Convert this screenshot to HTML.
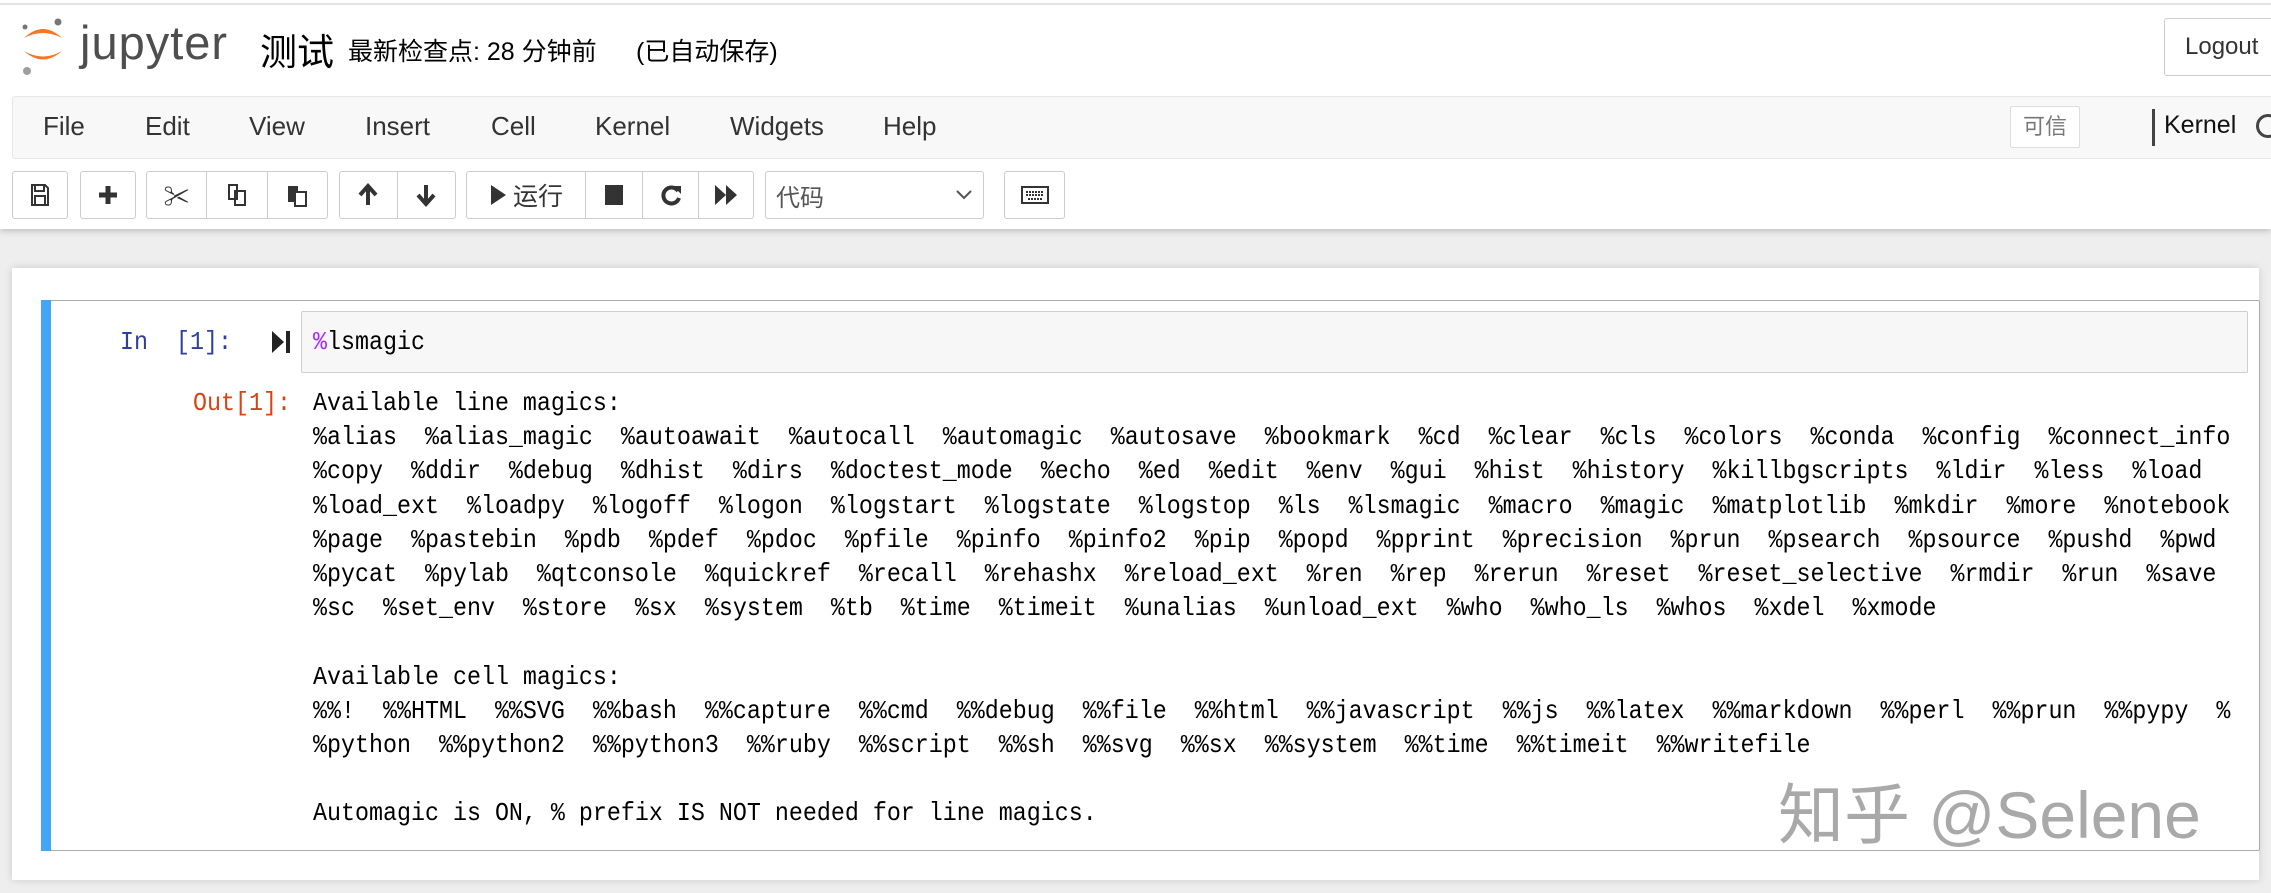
<!DOCTYPE html>
<html><head><meta charset="utf-8">
<style>
*{box-sizing:border-box;margin:0;padding:0}
body{width:2271px;height:893px;overflow:hidden;background:#eee;font-family:"Liberation Sans","Noto Sans CJK SC",sans-serif;position:relative;color:#333}
.abs{position:absolute}
#hdr{left:0;top:0;width:2271px;height:229px;background:#fff;box-shadow:0 2px 6px rgba(0,0,0,.2)}
#topline{left:0;top:3px;width:2271px;height:2px;background:#e3e3e3}
#menubar{left:12px;top:96px;width:2280px;height:63px;background:#f8f8f8;border:1px solid #e7e7e7;border-radius:3px}
.mi{top:111px;font-size:26px;color:#333}
.btn{top:171px;height:48px;border:1px solid #ccc;border-radius:3px;background:#fff;display:flex;align-items:center;justify-content:center}
.grp{display:flex;top:171px;height:48px;border:1px solid #ccc;border-radius:3px;background:#fff}
.grp>div{height:46px;display:flex;align-items:center;justify-content:center;border-right:1px solid #ccc}
.grp>div:last-child{border-right:none}
#nb{left:12px;top:268px;width:2247px;height:612px;background:#fff;box-shadow:0 0 8px rgba(0,0,0,.15)}
#cell{left:41px;top:300px;width:2219px;height:551px;border:1px solid #ababab;border-radius:2px}
#bar{left:41px;top:300px;width:10px;height:551px;background:#42a5f5}
.mono{font-family:"Liberation Mono","Noto Sans CJK SC",monospace;font-size:26px;transform-origin:0 0;transform:scaleX(0.897);white-space:pre}
</style></head><body>
<div id="hdr" class="abs"></div>
<div id="topline" class="abs"></div>
<svg class="abs" style="left:18px;top:18px" width="50" height="58" viewBox="0 0 50 58">
<path d="M6 20 Q25 2 44 20 Q25 10 6 20Z" fill="#f37726"/>
<path d="M6 33 Q25 50 44 33 Q25 44 6 33Z" fill="#f37726"/>
<circle cx="7" cy="9" r="2.5" fill="#767677"/>
<circle cx="40" cy="4" r="3.5" fill="#767677"/>
<circle cx="9" cy="53" r="4" fill="#9e9e9e"/>
</svg>
<div class="abs" style="left:80px;top:15px;font-size:47px;color:#4e4e4e;letter-spacing:1px">jupyter</div>
<div class="abs" style="left:260px;top:22px;font-size:37px;color:#000">测试</div>
<div class="abs" style="left:348px;top:32px;font-size:25px;color:#000">最新检查点: 28 分钟前</div>
<div class="abs" style="left:636px;top:32px;font-size:25px;color:#000">(已自动保存)</div>
<div class="abs" style="left:2164px;top:18px;width:120px;height:58px;border:1px solid #ccc;border-radius:3px;background:#fff;font-size:24px;padding:14px 0 0 20px;color:#333">Logout</div>

<div id="menubar" class="abs"></div>
<div class="abs mi" style="left:43px">File</div>
<div class="abs mi" style="left:145px">Edit</div>
<div class="abs mi" style="left:249px">View</div>
<div class="abs mi" style="left:365px">Insert</div>
<div class="abs mi" style="left:491px">Cell</div>
<div class="abs mi" style="left:595px">Kernel</div>
<div class="abs mi" style="left:730px">Widgets</div>
<div class="abs mi" style="left:883px">Help</div>
<div class="abs" style="left:2010px;top:106px;width:70px;height:42px;border:1px solid #ddd;border-radius:2px;background:#fff;font-size:22px;color:#777;text-align:center;line-height:40px">可信</div>
<div class="abs" style="left:2152px;top:109px;width:3px;height:37px;background:#444"></div>
<div class="abs" style="left:2164px;top:111px;font-size:25px;color:#111">Kernel</div>
<div class="abs" style="left:2256px;top:114px;width:24px;height:24px;border:3px solid #444;border-radius:50%"></div>

<div class="abs btn" style="left:12px;width:56px"><svg width="18" height="22" viewBox="0 0 18 22"><path d="M1 1h13l3 3v17H1z M4 1v6h9V1 M4 12h10v9H4z" fill="none" stroke="#333" stroke-width="2"/></svg></div>
<div class="abs btn" style="left:80px;width:56px"><svg width="20" height="20"><path d="M10 1v18M1 10h18" stroke="#333" stroke-width="5"/></svg></div>
<div class="abs grp" style="left:146px;width:182px">
<div style="width:61px;font-size:26px;color:#333">✂</div>
<div style="width:61px"><svg width="20" height="24" viewBox="0 0 20 24"><path d="M2 2h8v14H2z M8 8h10v14H8z" fill="#fff" stroke="#333" stroke-width="2"/></svg></div>
<div style="width:60px"><svg width="20" height="24" viewBox="0 0 20 24"><path d="M1 3h10v16H1z" fill="#333"/><path d="M8 9h11v14H8z" fill="#fff" stroke="#333" stroke-width="2"/></svg></div>
</div>
<div class="abs grp" style="left:339px;width:117px">
<div style="width:58px"><svg width="20" height="24"><path d="M10 22V4M2 12l8-9 8 9" fill="none" stroke="#333" stroke-width="4"/></svg></div>
<div style="width:58px"><svg width="20" height="24"><path d="M10 2v18M2 12l8 9 8-9" fill="none" stroke="#333" stroke-width="4"/></svg></div>
</div>
<div class="abs grp" style="left:466px;width:288px">
<div style="width:119px;font-size:25px;color:#333"><svg width="18" height="24" style="margin-right:6px"><path d="M2 2l15 10L2 22z" fill="#333"/></svg>运行</div>
<div style="width:57px"><svg width="20" height="22"><rect x="1" y="1" width="18" height="20" fill="#333"/></svg></div>
<div style="width:56px"><svg width="22" height="24" viewBox="0 0 22 24"><path d="M18 8A8 8 0 1 0 19 15" fill="none" stroke="#333" stroke-width="4"/><path d="M13 3h8v8z" fill="#333"/></svg></div>
<div style="width:54px"><svg width="24" height="22"><path d="M1 1l11 10L1 21zM12 1l11 10-11 10z" fill="#333"/></svg></div>
</div>
<div class="abs btn" style="left:765px;width:219px;justify-content:flex-start;padding-left:10px;font-size:24px;color:#555">代码<svg class="abs" style="left:190px;top:18px" width="16" height="10"><path d="M1 1l7 7 7-7" fill="none" stroke="#555" stroke-width="2"/></svg></div>
<div class="abs btn" style="left:1004px;width:61px"><svg width="28" height="18"><rect x="1" y="1" width="26" height="16" fill="none" stroke="#333" stroke-width="2"/><path d="M5 6h18M5 9h18M7 13h14" stroke="#333" stroke-width="2" stroke-dasharray="2 1"/></svg></div>

<div id="nb" class="abs"></div>
<div id="cell" class="abs"></div>
<div id="bar" class="abs"></div>
<div class="abs mono" style="left:120px;top:325px;color:#303f9f;line-height:34px">In  [1]:</div>
<svg class="abs" style="left:270px;top:329px" width="22" height="26"><path d="M2 2l12 11L2 24z" fill="#222"/><rect x="16" y="2" width="4" height="22" fill="#222"/></svg>
<div class="abs" style="left:301px;top:311px;width:1947px;height:62px;background:#f7f7f7;border:1px solid #cfcfcf;border-radius:2px"></div>
<div class="abs mono" style="left:313px;top:325px;line-height:34px;color:#000"><span style="color:#aa22ff">%</span>lsmagic</div>
<div class="abs mono" style="left:193px;top:386px;color:#d84315;line-height:34.2px">Out[1]:</div>
<div class="abs mono" style="left:313px;top:386px;line-height:34.2px;color:#000">Available line magics:
%alias  %alias_magic  %autoawait  %autocall  %automagic  %autosave  %bookmark  %cd  %clear  %cls  %colors  %conda  %config  %connect_info
%copy  %ddir  %debug  %dhist  %dirs  %doctest_mode  %echo  %ed  %edit  %env  %gui  %hist  %history  %killbgscripts  %ldir  %less  %load
%load_ext  %loadpy  %logoff  %logon  %logstart  %logstate  %logstop  %ls  %lsmagic  %macro  %magic  %matplotlib  %mkdir  %more  %notebook
%page  %pastebin  %pdb  %pdef  %pdoc  %pfile  %pinfo  %pinfo2  %pip  %popd  %pprint  %precision  %prun  %psearch  %psource  %pushd  %pwd
%pycat  %pylab  %qtconsole  %quickref  %recall  %rehashx  %reload_ext  %ren  %rep  %rerun  %reset  %reset_selective  %rmdir  %run  %save
%sc  %set_env  %store  %sx  %system  %tb  %time  %timeit  %unalias  %unload_ext  %who  %who_ls  %whos  %xdel  %xmode

Available cell magics:
%%!  %%HTML  %%SVG  %%bash  %%capture  %%cmd  %%debug  %%file  %%html  %%javascript  %%js  %%latex  %%markdown  %%perl  %%prun  %%pypy  %
%python  %%python2  %%python3  %%ruby  %%script  %%sh  %%svg  %%sx  %%system  %%time  %%timeit  %%writefile

Automagic is ON, % prefix IS NOT needed for line magics.</div>
<div class="abs" style="left:1778px;top:762px;font-size:66px;color:rgba(140,140,140,0.75);white-space:nowrap">知乎 @Selene</div>
</body></html>
